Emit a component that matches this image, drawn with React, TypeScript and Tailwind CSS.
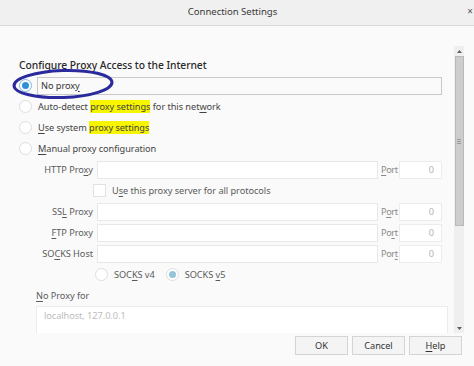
import React from "react";

function U({ children }: { children: React.ReactNode }) {
  return <span className="underline decoration-1 underline-offset-[2px]">{children}</span>;
}

function Hi({ children }: { children: React.ReactNode }) {
  return <span className="bg-[#f7f500]">{children}</span>;
}

function Radio({ checked = false, disabled = false }: { checked?: boolean; disabled?: boolean }) {
  return (
    <span
      className={`w-[13px] h-[13px] rounded-full bg-white flex items-center justify-center shrink-0 border ${
        checked && !disabled ? "border-[#7fb6e0]" : "border-[#dedede]"
      }`}
    >
      {checked && (
        <span className={`w-[7px] h-[7px] rounded-full ${disabled ? "bg-[#94c5d6]" : "bg-[#2f8fd6]"}`} />
      )}
    </span>
  );
}

function ProxyRow({ label, port }: { label: React.ReactNode; port: React.ReactNode }) {
  return (
    <div className="h-[21px] flex items-center">
      <div className="w-[78px] pr-[4px] text-right text-[#5a5a5a] whitespace-nowrap">{label}</div>
      <div className="w-[281px] h-[18px] bg-white border border-[#e8e8e8]" />
      <div className="w-[21px] pl-[3px] text-[#8a8a8a] tracking-[-0.4px] whitespace-nowrap">{port}</div>
      <div className="w-[43px] h-[18px] bg-white border border-[#ececec] flex items-center justify-end pr-[7px] text-[#b4b4b4]">
        0
      </div>
    </div>
  );
}

function Button({ children }: { children: React.ReactNode }) {
  return (
    <button className="w-[53px] h-[19px] bg-[#f4f4f4] border border-[#d4d4d4] text-[#333] flex items-center justify-center">
      {children}
    </button>
  );
}

export default function App() {
  return (
    <div className="w-[474px] h-[366px] bg-[#fafafa] flex flex-col overflow-hidden font-['Noto_Sans',sans-serif] text-[9.2px] tracking-[-0.05px] text-[#3c3c3c] relative">
      {/* title bar */}
      <div className="h-[26px] shrink-0 bg-[#f0f0f0] border-b border-[#dadada] flex items-center justify-center pr-[9px] relative text-[9.6px] text-[#3a3a3a]">
        Connection Settings
        <span className="absolute right-[1px] top-[6px] text-[10px] leading-none text-[#555]">×</span>
      </div>

      {/* scrolling body */}
      <div className="mt-[20px] h-[287px] shrink-0 flex">
        <div className="flex-1 overflow-hidden pt-[11px] pl-[19px]">
          <div className="h-[18px] flex items-center text-[10.3px] font-medium text-[#2a2a2a]">
            Configure Proxy Access to the Internet
          </div>

          <div className="h-[21px] flex items-center">
            <Radio checked />
            <div className="ml-[5px] w-[405px] h-[18px] border border-[#c9c9c9] flex items-center pl-[3px] text-[#333]">
              No prox<U>y</U>
            </div>
          </div>
          <div className="h-[21px] flex items-center">
            <Radio />
            <span className="ml-[6px] text-[#444]">
              Auto-detect <Hi>proxy settings</Hi> for this net<U>w</U>ork
            </span>
          </div>
          <div className="h-[21px] flex items-center">
            <Radio />
            <span className="ml-[6px] text-[#444]">
              <U>U</U>se system <Hi>proxy settings</Hi>
            </span>
          </div>
          <div className="h-[21px] flex items-center">
            <Radio />
            <span className="ml-[6px] text-[#444]">
              <U>M</U>anual proxy configuration
            </span>
          </div>

          <ProxyRow label={<>HTTP Pro<U>x</U>y</>} port={<><U>P</U>ort</>} />
          <div className="h-[21px] flex items-center pl-[74px]">
            <span className="w-[13px] h-[13px] bg-white border border-[#e2e2e2] shrink-0" />
            <span className="ml-[6px] text-[#5a5a5a]">
              U<U>s</U>e this proxy server for all protocols
            </span>
          </div>
          <ProxyRow label={<>SS<U>L</U> Proxy</>} port={<>P<U>o</U>rt</>} />
          <ProxyRow label={<><U>F</U>TP Proxy</>} port={<>Po<U>r</U>t</>} />
          <ProxyRow label={<>SO<U>C</U>KS Host</>} port={<>Por<U>t</U></>} />

          <div className="h-[21px] flex items-center pl-[76px] text-[#5a5a5a]">
            <Radio disabled />
            <span className="ml-[6px]">
              SOC<U>K</U>S v4
            </span>
            <span className="ml-[11px] flex items-center">
              <Radio checked disabled />
            </span>
            <span className="ml-[6px]">
              SOCKS <U>v</U>5
            </span>
          </div>

          <div className="h-[21px] flex items-center pl-[17px] text-[#5a5a5a]">
            <span>
              <U>N</U>o Proxy for
            </span>
          </div>
          <div className="ml-[17px] w-[412px] h-[40px] bg-white border border-[#ececec] pl-[7px] pt-[2px] text-[#bdbdbd]">
            localhost, 127.0.0.1
          </div>
        </div>

        {/* scrollbar */}
        <div className="w-[10px] mr-[10px] bg-[#efefef] flex flex-col items-center">
          <div className="h-[10px] flex items-center justify-center">
            <svg width="5" height="3" viewBox="0 0 5 3">
              <path d="M0 3 L2.5 0 L5 3 Z" fill="#606060" />
            </svg>
          </div>
          <div className="w-[9px] h-[170px] bg-[#cdcdcd] border border-[#b9b9b9] flex items-center justify-center">
            <svg width="4" height="5" viewBox="0 0 4 5">
              <path d="M0 0.5 H4 M0 2.5 H4 M0 4.5 H4" stroke="#9a9a9a" strokeWidth="1" />
            </svg>
          </div>
          <div className="flex-1" />
          <div className="h-[10px] flex items-center justify-center">
            <svg width="5" height="3" viewBox="0 0 5 3">
              <path d="M0 0 L5 0 L2.5 3 Z" fill="#606060" />
            </svg>
          </div>
        </div>
      </div>

      {/* buttons */}
      <div className="mt-[3px] flex justify-end gap-[4px] pr-[12px]">
        <Button>OK</Button>
        <Button>Cancel</Button>
        <Button>
          <U>H</U>elp
        </Button>
      </div>

      {/* hand-drawn annotation */}
      <svg className="absolute left-[10px] top-[67px] pointer-events-none" width="108" height="34" viewBox="0 0 108 34">
        <ellipse cx="53" cy="17" rx="49" ry="13.5" fill="none" stroke="#2a2a9e" strokeWidth="3" transform="rotate(-2 53 17)" />
      </svg>
    </div>
  );
}
